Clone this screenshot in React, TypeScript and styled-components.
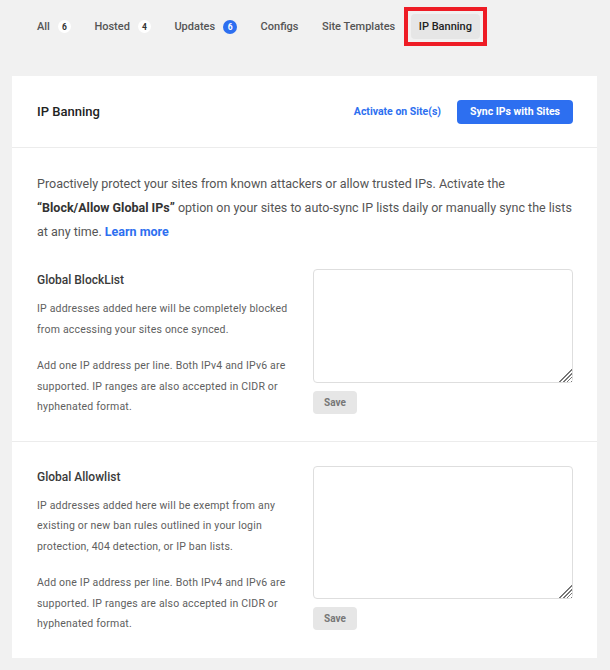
import styled, { createGlobalStyle } from "styled-components";

const GlobalStyle = createGlobalStyle`
  html, body {
    margin: 0;
    padding: 0;
    background: #f1f1f1;
    font-family: Roboto, "Liberation Sans", sans-serif;
  }
  * { box-sizing: border-box; }
`;

const Page = styled.div`
  width: 610px;
  min-height: 670px;
  padding: 14px 13px 13px 12px;
`;

const Tabs = styled.nav`
  display: flex;
  align-items: center;
  height: 25px;
  padding-left: 17px;
  gap: 7.5px;
`;

const Tab = styled.div<{ $active?: boolean }>`
  position: relative;
  display: flex;
  align-items: center;
  gap: 8px;
  height: 25px;
  padding: 0 8px;
  border-radius: 4px;
  font-size: 11px;
  font-weight: 500;
  color: ${(p) => (p.$active ? "#222" : "#555")};
  background: ${(p) => (p.$active ? "#e6e6e6" : "transparent")};
  ${(p) =>
    p.$active &&
    `
    &::after {
      content: "";
      position: absolute;
      inset: -7px;
      border: 4px solid #ee1c25;
    }
  `}
`;

const Badge = styled.span<{ $blue?: boolean }>`
  display: inline-flex;
  align-items: center;
  justify-content: center;
  width: ${(p) => (p.$blue ? "14px" : "13px")};
  height: ${(p) => (p.$blue ? "14px" : "13px")};
  border-radius: 50%;
  font-size: 8.5px;
  font-weight: 700;
  background: ${(p) => (p.$blue ? "#2d6ff0" : "#fff")};
  color: ${(p) => (p.$blue ? "#fff" : "#333")};
`;

const Card = styled.section`
  margin-top: 37px;
  background: #fff;
`;

const CardHeader = styled.header`
  display: flex;
  align-items: center;
  height: 72px;
  padding: 0 24px 0 25px;
  border-bottom: 1px solid #ececec;
`;

const HeaderTitle = styled.h1`
  flex: 1;
  margin: 0;
  font-size: 13px;
  font-weight: 500;
  color: #222;
`;

const LinkButton = styled.a`
  font-size: 10.5px;
  font-weight: 700;
  color: #2d6ff0;
  margin-right: 16px;
  cursor: pointer;
`;

const PrimaryButton = styled.button`
  height: 24px;
  padding: 0 13px;
  border: none;
  border-radius: 4px;
  background: #2d6ff0;
  color: #fff;
  font-family: inherit;
  font-size: 10.5px;
  font-weight: 700;
`;

const Section = styled.div<{ $divider?: boolean }>`
  padding: 24px 24px 23px 25px;
  ${(p) => p.$divider && "border-bottom: 1px solid #ececec;"}
`;

const Intro = styled.p`
  margin: 0 0 25px;
  font-size: 12.5px;
  line-height: 24px;
  color: #555;
  strong { color: #333; font-weight: 700; }
  a { color: #2d6ff0; font-weight: 700; text-decoration: none; }
`;

const Row = styled.div`
  display: grid;
  grid-template-columns: 1fr 260px;
  column-gap: 20px;
`;

const Info = styled.div`
  padding-top: 1px;
`;

const ListTitle = styled.h2`
  margin: 0 0 9px;
  font-size: 12px;
  font-weight: 500;
  line-height: 20px;
  color: #3a3a3a;
`;

const Desc = styled.p`
  margin: 0 0 16px;
  font-size: 10.5px;
  line-height: 20.5px;
  letter-spacing: 0.2px;
  color: #606060;
  &:last-child { margin-bottom: 0; }
`;

const Field = styled.div`
  display: flex;
  flex-direction: column;
  align-items: flex-start;
  gap: 8px;
`;

const TextArea = styled.textarea<{ $h: number }>`
  width: 260px;
  height: ${(p) => p.$h}px;
  border: 1px solid #dedede;
  border-radius: 4px;
  resize: vertical;
  font-family: inherit;
  &::-webkit-resizer {
    background:
      linear-gradient(135deg, #fff 50%, transparent 50%),
      repeating-linear-gradient(135deg, #fff 0 1.6px, #777 1.6px 2.6px);
  }
`;

const SaveButton = styled.button`
  height: 23px;
  padding: 0 11px;
  border: none;
  border-radius: 4px;
  background: #e6e6e6;
  color: #777;
  font-family: inherit;
  font-size: 10px;
  font-weight: 700;
`;

const lists = [
  {
    title: "Global BlockList",
    paras: [
      "IP addresses added here will be completely blocked from accessing your sites once synced.",
      "Add one IP address per line. Both IPv4 and IPv6 are supported. IP ranges are also accepted in CIDR or hyphenated format.",
    ],
    h: 114,
  },
  {
    title: "Global Allowlist",
    paras: [
      "IP addresses added here will be exempt from any existing or new ban rules outlined in your login protection, 404 detection, or IP ban lists.",
      "Add one IP address per line. Both IPv4 and IPv6 are supported. IP ranges are also accepted in CIDR or hyphenated format.",
    ],
    h: 133,
  },
];

const ListRow = ({ title, paras, h }: { title: string; paras: string[]; h: number }) => (
  <Row>
    <Info>
      <ListTitle>{title}</ListTitle>
      {paras.map((p) => (
        <Desc key={p}>{p}</Desc>
      ))}
    </Info>
    <Field>
      <TextArea $h={h} />
      <SaveButton>Save</SaveButton>
    </Field>
  </Row>
);

const App = () => {
  return (
    <Page>
      <GlobalStyle />
      <Tabs>
        <Tab>
          All <Badge>6</Badge>
        </Tab>
        <Tab>
          Hosted <Badge>4</Badge>
        </Tab>
        <Tab>
          Updates <Badge $blue>6</Badge>
        </Tab>
        <Tab>Configs</Tab>
        <Tab>Site Templates</Tab>
        <Tab $active>IP Banning</Tab>
      </Tabs>
      <Card>
        <CardHeader>
          <HeaderTitle>IP Banning</HeaderTitle>
          <LinkButton>Activate on Site(s)</LinkButton>
          <PrimaryButton>Sync IPs with Sites</PrimaryButton>
        </CardHeader>
        <Section $divider>
          <Intro>
            Proactively protect your sites from known attackers or allow trusted IPs. Activate the{" "}
            <strong>“Block/Allow Global IPs”</strong> option on your sites to auto-sync IP lists daily
            or manually sync the lists at any time. <a>Learn more</a>
          </Intro>
          <ListRow {...lists[0]} />
        </Section>
        <Section>
          <ListRow {...lists[1]} />
        </Section>
      </Card>
    </Page>
  );
};

export default App;
